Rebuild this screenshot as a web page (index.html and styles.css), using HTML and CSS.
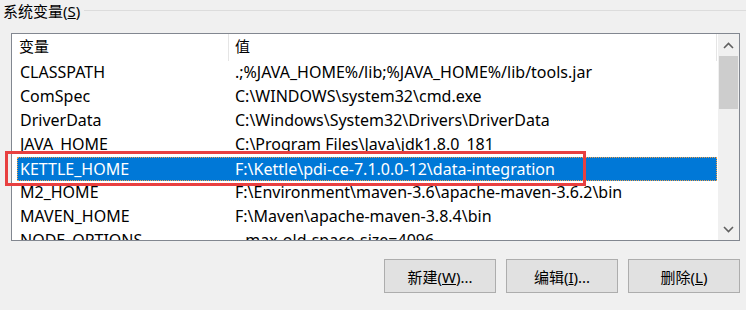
FILE: index.html
```html
<!DOCTYPE html>
<html lang="zh-CN">
<head>
  <meta charset="UTF-8">
  <title>系统变量</title>
  <link rel="stylesheet" href="styles.css">
</head>
<body>
  <div class="group">
    <div class="group-title">
      <span class="title-text">系统变量(<u>S</u>)</span>
      <span class="title-rule"></span>
    </div>

    <div class="listbox">
      <div class="list">
        <div class="list-head">
          <div class="col-name">变量</div>
          <div class="col-value">值</div>
        </div>
        <div class="row"><div class="col-name">CLASSPATH</div><div class="col-value">.;%JAVA_HOME%/lib;%JAVA_HOME%/lib/tools.jar</div></div>
        <div class="row"><div class="col-name">ComSpec</div><div class="col-value">C:\WINDOWS\system32\cmd.exe</div></div>
        <div class="row"><div class="col-name">DriverData</div><div class="col-value">C:\Windows\System32\Drivers\DriverData</div></div>
        <div class="row"><div class="col-name">JAVA_HOME</div><div class="col-value">C:\Program Files\Java\jdk1.8.0_181</div></div>
        <div class="row selected"><div class="col-name">KETTLE_HOME</div><div class="col-value">F:\Kettle\pdi-ce-7.1.0.0-12\data-integration</div></div>
        <div class="row"><div class="col-name">M2_HOME</div><div class="col-value">F:\Environment\maven-3.6\apache-maven-3.6.2\bin</div></div>
        <div class="row"><div class="col-name">MAVEN_HOME</div><div class="col-value">F:\Maven\apache-maven-3.8.4\bin</div></div>
        <div class="row"><div class="col-name">NODE_OPTIONS</div><div class="col-value">--max-old-space-size=4096</div></div>
      </div>
      <div class="scrollbar">
        <div class="sb-arrow">
          <svg width="11" height="7" viewBox="0 0 11 7"><path d="M1 6 L5.5 1.5 L10 6" fill="none" stroke="#606060" stroke-width="1.6"/></svg>
        </div>
        <div class="sb-track"><div class="sb-thumb"></div></div>
        <div class="sb-arrow">
          <svg width="11" height="7" viewBox="0 0 11 7"><path d="M1 1 L5.5 5.5 L10 1" fill="none" stroke="#606060" stroke-width="1.6"/></svg>
        </div>
      </div>
      <!-- annotation drawn over the selected row -->
      <div class="highlight"></div>
    </div>

    <div class="actions">
      <button class="btn">新建(<u>W</u>)...</button>
      <button class="btn">编辑(<u>I</u>)...</button>
      <button class="btn">删除(<u>L</u>)</button>
    </div>
  </div>
</body>
</html>
```

FILE: styles.css
```css
body {
  margin: 0;
  background: #f0f0f0;
  font-family: "Noto Sans", "Noto Sans CJK SC", sans-serif;
  font-size: 15px;
  color: #000;
}

.group {
  width: 746px;
  height: 310px;
}

.group-title {
  display: flex;
  align-items: center;
  height: 24px;
  padding-left: 3px;
}

.title-text {
  line-height: 22px;
  margin-top: -2px;
  padding-right: 4px;
}

.title-rule {
  flex: 1;
  height: 1px;
  background: #dcdcdc;
  margin-top: -3px;
}

.listbox {
  position: relative;
  display: flex;
  margin: 9px 0 0 11px;
  width: 727px;
  height: 206px;
  border: 1px solid #828790;
  background: #fff;
}

.list {
  width: 706px;
  overflow: hidden;
}

.list-head {
  display: flex;
  height: 27px;
  align-items: center;
  padding-left: 7px;
}

.list-head .col-name {
  width: 209px;
  height: 27px;
  line-height: 25px;
  border-right: 1px solid #e5e5e5;
}

.list-head .col-value {
  flex: 1;
  height: 27px;
  line-height: 25px;
  padding-left: 6px;
  border-right: 1px solid #e5e5e5;
  margin-right: 1px;
}

.row {
  display: flex;
  height: 24px;
  line-height: 23px;
  margin-left: 5px;
  width: 700px;
  box-sizing: border-box;
  white-space: nowrap;
  font-size: 16px;
}

.row .col-name {
  width: 215px;
  padding-left: 3px;
  box-sizing: border-box;
}

.row .col-value {
  flex: 1;
  padding-left: 3px;
}

.row.selected {
  background: #0078d7;
  color: #fff;
  border: 1px dotted #f0a04a;
}

.row.selected .col-name {
  padding-left: 2px;
}

.row.selected .col-value {
  padding-left: 2px;
}

.scrollbar {
  width: 21px;
  display: flex;
  flex-direction: column;
  background: #f0f0f0;
}

.sb-arrow {
  height: 22px;
  display: flex;
  align-items: center;
  justify-content: center;
}

.sb-track {
  flex: 1;
}

.sb-thumb {
  height: 53px;
  margin: 0 1px;
  background: #cdcdcd;
}

.highlight {
  position: absolute;
  left: -7px;
  top: 117px;
  width: 575px;
  height: 29px;
  border: 3px solid #e84040;
}

.actions {
  display: flex;
  justify-content: flex-end;
  gap: 10px;
  margin: 18px 6px 0 0;
}

.btn {
  width: 112px;
  height: 34px;
  background: #e1e1e1;
  border: 1px solid #adadad;
  font-family: inherit;
  font-size: 15px;
  color: #000;
  padding: 0;
}
```
